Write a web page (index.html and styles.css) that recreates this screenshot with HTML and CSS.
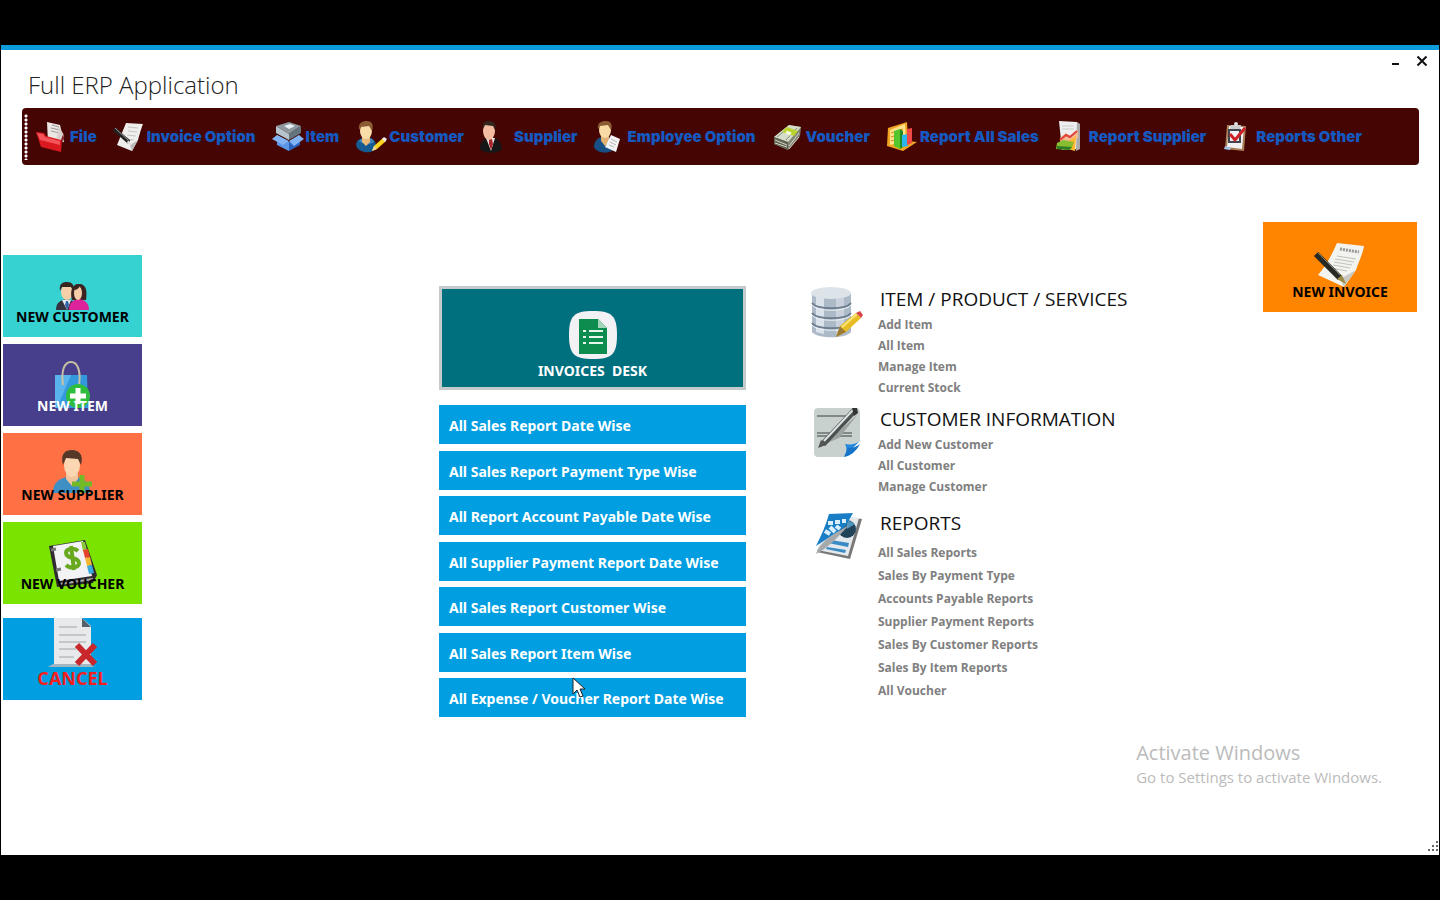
FILE: index.html
```html
<!DOCTYPE html>
<html lang="en">
<head>
    <meta charset="UTF-8">
    <meta name="viewport" content="width=device-width, initial-scale=1.0">
    <title>Full ERP Application</title>
    <link rel="stylesheet" href="styles.css">
</head>
<body>

<div class="window">
    <header class="titlebar">
        <h1>Full ERP Application</h1>
        <div class="window-controls">
            <button type="button" aria-label="Minimize"><svg width="12" height="12" viewBox="0 0 12 12"><path d="M2 9h7" stroke="#111" stroke-width="2"/></svg></button>
            <button type="button" aria-label="Close"><svg width="12" height="12" viewBox="0 0 12 12"><path d="M1.500 1.500l9 9M10.500 1.500l-9 9" stroke="#111" stroke-width="2"/></svg></button>
        </div>
    </header>

    <nav class="menu">
        <span class="grip"></span>
        <button type="button">
            <svg viewBox="0 0 32 32"><path d="M11 1l13 3 4 17-16 1z" fill="#ece7e4"/><path d="M16 4l7 2M15 7l9 2M15 10l9 2" stroke="#999" fill="none"/><path d="M23 6l5 8-4 14-5-4z" fill="#d8d0cd"/><path d="M0 11l8 1 2 3 15 4v12L5 26z" fill="#d91820"/><path d="M1 12l6 1 2 3 15 4v4L4 19z" fill="#f4535a"/><path d="M25 19l3-8-3 20z" fill="#8e1015"/></svg>
            File
        </button>
        <button type="button">
            <svg viewBox="0 0 32 32"><path d="M13 2l17 1c-2 5-3 9-5 16l-6 11-15-6z" fill="#eeeeec"/><path d="M19 30l-2-6 8-5z" fill="#bbb"/><path d="M15 6l10 1M15 10l9 1M14 14l9 1M13 18l8 1" stroke="#c6c6c6"/><path d="M1 8l15 13" stroke="#222" stroke-width="4"/><path d="M2 7l13 12" stroke="#999"/><path d="M15 19l4 5-5-2z" fill="#ddd"/></svg>
            Invoice Option
        </button>
        <button type="button">
            <svg viewBox="0 0 32 32"><path d="M4 5l13-4 12 4-12 8z" fill="#8c979e"/><path d="M4 5l13 8v6L4 12z" fill="#b6c4ce"/><path d="M17 13l12-8v7l-12 7z" fill="#65757f"/><path d="M12 5l6-2 5 2-6 3z" fill="#e9eff2"/><path d="M5 14l12 7v9L5 24z" fill="#5b95e6"/><path d="M17 21l11-7v10l-11 6z" fill="#2a62bd"/><path d="M5 14l-5 4 11 6 6-4zM17 20l10-6 5 4-10 7z" fill="#82b3f4"/></svg>
            Item
        </button>
        <button type="button">
            <svg viewBox="0 0 32 32"><path d="M1 24c0-5 5-7 11-8 6 1 9 4 9 9-1 9-18 8-20-1z" fill="#155a91"/><path d="M4 20c4-5 13-5 15 1-5 3-10 3-15-1z" fill="#4288ba"/><path d="M7 14h8v7l-4 4-4-4z" fill="#e9ba79"/><ellipse cx="11" cy="10" rx="6" ry="8" fill="#f8dda9"/><path d="M4 9C3 2 7 0 12 0s7 4 5 10L14 5 6 6z" fill="#8b5c33"/><path d="M17 30l2-5 9-8 3 3-9 8z" fill="#f7d51e"/><path d="M17 30l2-5 3 3z" fill="#ead5a6"/><path d="M27 18l3 3 2-3-3-2z" fill="#eee"/></svg>
            Customer
        </button>
        <button type="button">
            <svg viewBox="0 0 32 32"><path d="M0 28c0-8 5-11 10-12 6 1 11 3 12 12-4 5-18 5-22 0z" fill="#161616"/><path d="M6 17h9l-4 13z" fill="#e9e5e2"/><path d="M9 18h3l1 5-2 6-2-6z" fill="#a9232c"/><ellipse cx="9" cy="10" rx="6" ry="9" fill="#f4bda1"/><path d="M3 8C2 2 5 0 9 0s8 2 6 9L13 5 5 4z" fill="#33261f"/></svg>
            Supplier
        </button>
        <button type="button">
            <svg viewBox="0 0 32 32"><path d="M0 26c0-7 5-10 11-11 7 1 10 5 10 11-3 8-18 7-21 0z" fill="#174f84"/><path d="M7 14h8v6l-4 5-4-5z" fill="#e2b173"/><ellipse cx="11" cy="9" rx="6" ry="8" fill="#f8daa5"/><path d="M4 8C3 2 7 0 12 0s7 4 5 9L14 4 6 5z" fill="#8b5c33"/><path d="M17 14l9 4-4 13-11-5z" fill="#f5f5f5"/><path d="M17 18l6 3M16 21l6 3M15 24l5 2" stroke="#b5b5b5"/></svg>
            Employee Option
        </button>
        <button type="button">
            <svg viewBox="0 0 32 32"><path d="M2 16L17 4l12 2-1 9-12 14L2 23z" fill="#828573"/><path d="M2 16L17 4l12 2-13 15z" fill="#d6decb"/><path d="M5 16l11-9M14 19L25 7" stroke="#848c7b"/><path d="M10 11l5-5 11 4-4 5z" fill="#b9d42e"/><path d="M14 11l5 2" stroke="#f4f8da" stroke-width="3"/><path d="M2 16l14 5v8L2 23z" fill="#60634f"/><path d="M3 19l12 5M3 22l12 4M17 25l10-13M17 28l10-12" stroke="#d3d4ca"/></svg>
            Voucher
        </button>
        <button type="button">
            <svg viewBox="0 0 32 32"><path d="M2 7l19-6 1 19 9 1-14 9-16-5z" fill="#f2a423"/><path d="M4 9l15-6 1 17-16 4z" fill="#ffe28b"/><path d="M5 12l12-4M5 16l12-4M5 20l12-4" stroke="#d68b17"/><path d="M8 10l6-2v20l-6-3z" fill="#55c52d"/><path d="M14 8l3 2v16l-3 2z" fill="#248b21"/><path d="M16 14l6-1v12l-6 1z" fill="#2ab6ed"/><path d="M21 8l5-1v15l-5 2z" fill="#ee4848"/></svg>
            Report All Sales
        </button>
        <button type="button">
            <svg viewBox="0 0 32 32"><path d="M4 0l18 1 2 27-17 1z" fill="#eee"/><path d="M22 1l3 2v25l-4 2z" fill="#aaa"/><path d="M7 5h12M7 8h12" stroke="#ccc"/><path d="M5 17l6-5 4 3 8-6v8L5 24z" fill="#f4ba91"/><path d="M5 19l6-5 4 2 7-6" stroke="#e04036" stroke-width="2" fill="none"/><path d="M14 20l7-5-1 15-7-2z" fill="#ffb72d"/><path d="M2 22l6-3 11 2-3 8-15-1z" fill="#86bd31"/><path d="M2 25l15 1-3 3-12-1z" fill="#317b26"/></svg>
            Report Supplier
        </button>
        <button type="button">
            <svg viewBox="0 0 32 32"><path d="M5 4l19 1-2 25-19-2z" fill="#a87d58"/><path d="M7 5l15 1-2 22-15-2z" fill="#f2f2f4"/><path d="M7 9h11v12H7z" fill="none" stroke="#3e4652" stroke-width="2"/><path d="M9 4h10l-1 4H8z" fill="#ccc"/><circle cx="14" cy="3" r="2" fill="#ddd"/><path d="M8 13l5 6L23 7" stroke="#ce2027" stroke-width="3" fill="none"/><path d="M3 25l6 2-1 2-6-1z" fill="#9fc2e8"/></svg>
            Reports Other
        </button>
    </nav>

    <main>
        <!-- quick actions -->
        <div class="tiles">
            <button type="button" class="tile tile-customer">
                <svg viewBox="0 0 50 50"><path d="M8 39c0-8 5-10 11-11 6 1 9 4 9 11z" fill="#36323f"/><path d="M14 29h9l-4 10z" fill="#e8ebf4"/><path d="M18 30h2l1 4-2 5-2-5z" fill="#3265a5"/><ellipse cx="19" cy="21" rx="6" ry="8" fill="#f5cfaa"/><path d="M12 20c-1-7 2-9 7-9s8 3 6 9l-2-4-9 0z" fill="#37261f"/><path d="M24 29c-2-7-1-16 7-16s8 8 7 16z" fill="#3b2422"/><path d="M21 39c0-8 4-10 10-11 6 1 10 4 10 11z" fill="#dc239b"/><ellipse cx="30" cy="22" rx="4" ry="7" fill="#f7cda9"/><path d="M26 19c3 0 5-2 6-4l4 5-1-6-7-1z" fill="#3b2422"/></svg>
                <span>NEW CUSTOMER</span>
            </button>
            <button type="button" class="tile tile-item">
                <svg viewBox="0 0 50 50"><path d="M7 15h32l1 33H7z" fill="#3398dc"/><path d="M7 15h16L9 48H7z" fill="#59b3ec"/><path d="M15 25c-2-14 1-23 8-23s10 10 8 23" stroke="#c9c1a3" stroke-width="2" fill="none"/><circle cx="30" cy="36" r="12" fill="#2ebd3c"/><path d="M30 28v16M22 36h16" stroke="#fff" stroke-width="5"/></svg>
                <span>NEW ITEM</span>
            </button>
            <button type="button" class="tile tile-supplier">
                <svg viewBox="0 0 50 50"><path d="M5 44c0-12 7-15 19-17 11 2 18 6 18 17z" fill="#3d8fc4"/><path d="M18 25h12v5l-6 7-6-7z" fill="#f2c49b"/><ellipse cx="24" cy="16" rx="8" ry="12" fill="#fad6b3"/><path d="M15 16C12 5 17 1 24 1s12 5 9 15l-3-6-12-1z" fill="#553827"/><path d="M34 26v18M24 35h20" stroke="#72ba28" stroke-width="5"/></svg>
                <span>NEW SUPPLIER</span>
            </button>
            <button type="button" class="tile tile-voucher">
                <svg viewBox="0 0 50 50"><path d="M1 8l36-6 12 35-4 8-36 4z" fill="#302b30"/><path d="M5 8l30-5 9 35-33 5z" fill="#f3f2f5"/><path d="M33 4l4 0 2 8-4 1z" fill="#8cc83c"/><path d="M35 12l5-1 2 8-5 1z" fill="#e6432c"/><path d="M37 20l5-1 2 8-5 1z" fill="#f5b832"/><path d="M39 28l5-1 2 8-5 1z" fill="#39a9de"/><path d="M12 46l33-5" stroke="#aaa" stroke-width="2"/><path d="M3 12l5-1M8 32l5-1" stroke="#777" stroke-width="3"/><path d="M30 13c-4-4-12-2-12 2 0 6 13 4 13 10 0 5-9 6-13 2M23 8l3 24" stroke="#68a91e" stroke-width="4" fill="none"/></svg>
                <span>NEW VOUCHER</span>
            </button>
            <button type="button" class="tile tile-cancel">
                <svg viewBox="0 0 50 50"><path d="M6 0h28l9 8v40H6z" fill="#e7e9ea"/><path d="M34 0l9 9h-9z" fill="#55616a"/><path d="M11 9h18M11 17h27M11 24h27M11 31h17M11 39h15" stroke="#a1a6a9"/><path d="M0 49h46l-3-3H5z" fill="#a1b6c1"/><path d="M29 27l18 19M47 27L29 46" stroke="#c8272c" stroke-width="6"/></svg>
                <span>CANCEL</span>
            </button>
        </div>

        <!-- invoice reports -->
        <div class="desk">
            <button type="button" class="desk-main">
                <svg viewBox="0 0 48 48"><path d="M24 0c19 0 24 5 24 24s-5 24-24 24S0 43 0 24 5 0 24 0z" fill="#f2f1f3"/><path d="M10 8h19l9 9v26H10z" fill="#0d8c50"/><path d="M29 8l9 9h-9z" fill="#a3d5ba"/><path d="M20 20h14M20 26h14M20 32h14M14 20h3M14 26h3M14 32h3" stroke="#e7f5eb" stroke-width="2"/></svg>
                <span>INVOICES&nbsp; DESK</span>
            </button>
            <div class="desk-list">
                <button type="button">All Sales Report Date Wise</button>
                <button type="button">All Sales Report Payment Type Wise</button>
                <button type="button">All Report Account Payable Date Wise</button>
                <button type="button">All Supplier Payment Report Date Wise</button>
                <button type="button">All Sales Report Customer Wise</button>
                <button type="button">All Sales Report Item Wise</button>
                <button type="button">All Expense / Voucher Report Date Wise</button>
            </div>
            <svg class="cursor" width="14" height="22" viewBox="0 0 14 22"><path d="M1 1v16l4-4 3 7 3-1-3-7h5z" fill="#fff" stroke="#222"/></svg>
        </div>

        <!-- links -->
        <div class="info">
            <section>
                <svg viewBox="0 0 52 52"><path d="M1 8v38c5 7 34 7 39 0V8z" fill="#acb9c7"/><path d="M5 10h8v38l-8-2z" fill="#dae2ea"/><path d="M25 10h8v38h-8z" fill="#c8d1dc"/><ellipse cx="20" cy="7" rx="20" ry="6" fill="#dce4ea"/><path d="M1 17c5 7 34 7 39 0M1 27c5 7 34 7 39 0M1 37c5 7 34 7 39 0" stroke="#6d7e8f" stroke-width="2" fill="none"/><path d="M1 19c5 7 34 7 39 0M1 29c5 7 34 7 39 0M1 39c5 7 34 7 39 0" stroke="#edf1f5" fill="none"/><path d="M25 51l4-11 16-13 5 5-15 14z" fill="#e7bc24"/><path d="M30 42l16-14" stroke="#fbe476" stroke-width="2"/><path d="M25 51l4-11 6 6z" fill="#9b7b36"/><path d="M45 27l4-2 3 4-2 3z" fill="#d9464a"/></svg>
                <div>
                    <h2>ITEM / PRODUCT / SERVICES</h2>
                    <ul>
                        <li><a href="#">Add Item</a></li>
                        <li><a href="#">All Item</a></li>
                        <li><a href="#">Manage Item</a></li>
                        <li><a href="#">Current Stock</a></li>
                    </ul>
                </div>
            </section>
            <section>
                <svg viewBox="0 0 52 52"><rect x="3" y="2" width="46" height="49" rx="4" fill="#c9d1cf"/><path d="M6 10h31M6 27h35M6 30h35" stroke="#69716f" stroke-width="1.500"/><path d="M14 38L47 8 28 32z" fill="#9ba3a0"/><path d="M12 38L43 5" stroke="#4c5050" stroke-width="6"/><path d="M13 35L42 4" stroke="#dfe4e4" stroke-width="2"/><path d="M41 2l5 0 1 5-4 3z" fill="#333"/><path d="M7 42l3-8 5 5z" fill="#555"/><path d="M33 51c3-5 3-9 1-13 6 1 11 0 15-3z" fill="#2489dc"/><path d="M33 51l16-16v16z" fill="#fff"/><path d="M33 51c6-1 12-5 16-13-4 3-8 4-12 4z" fill="#1674c8"/></svg>
                <div>
                    <h2>CUSTOMER INFORMATION</h2>
                    <ul>
                        <li><a href="#">Add New Customer</a></li>
                        <li><a href="#">All Customer</a></li>
                        <li><a href="#">Manage Customer</a></li>
                    </ul>
                </div>
            </section>
            <section class="reports">
                <svg viewBox="0 0 52 52"><path d="M22 5l29 4-12 40L6 42z" fill="#777"/><path d="M22 4l26 4-11 38L6 40z" fill="#e3e9ed"/><circle cx="36" cy="19" r="9" fill="#21435a"/><path d="M36 19l-1-10 9 5z" fill="#4d94bf"/><path d="M20 30l18 3-1 4-20-4zM16 37l19 3-1 3-19-4z" fill="#3b8bc4"/><path d="M18 4l24-1-8 14L5 36c5-10 10-21 13-32z" fill="#197ec6"/><path d="M5 44c3-11 14-18 33-29C27 27 16 39 5 44z" fill="#a5a9ac"/><path d="M17 13h5M24 12h5M31 11h4M14 21l5 3M19 17l5 5M25 16l4 3" stroke="#d9efff" stroke-width="4" fill="none"/></svg>
                <div>
                    <h2>REPORTS</h2>
                    <ul>
                        <li><a href="#">All Sales Reports</a></li>
                        <li><a href="#">Sales By Payment Type</a></li>
                        <li><a href="#">Accounts Payable Reports</a></li>
                        <li><a href="#">Supplier Payment Reports</a></li>
                        <li><a href="#">Sales By Customer Reports</a></li>
                        <li><a href="#">Sales By Item Reports</a></li>
                        <li><a href="#">All Voucher</a></li>
                    </ul>
                </div>
            </section>
        </div>

        <button type="button" class="tile tile-invoice">
            <svg viewBox="0 0 54 54"><path d="M24 1l27 3c-1 7-5 15-8 24l-12 17L5 33c7-8 13-18 19-32z" fill="#f3f3ef"/><path d="M31 45l-4-8 16-9z" fill="#c9c9c4"/><path d="M27 7l19 3" stroke="#999" stroke-width="3" stroke-dasharray="2 1"/><path d="M24 14l19 3M22 17l19 3M21 20l18 3M20 23l17 3M18 26l16 3" stroke="#c0c0bd"/><path d="M3 12l24 24" stroke="#272a24" stroke-width="6"/><path d="M5 11l22 22" stroke="#7d806d"/><path d="M24 37l9 5-4-9z" fill="#9b8b43"/></svg>
            <span>NEW INVOICE</span>
        </button>
    </main>

    <div class="watermark">
        <p class="watermark-title">Activate Windows</p>
        <p>Go to Settings to activate Windows.</p>
    </div>
    <svg class="resize" width="12" height="12" viewBox="0 0 12 12"><path d="M9 0h2v2H9zM5 4h2v2H5zM9 4h2v2H9zM1 8h2v2H1zM5 8h2v2H5zM9 8h2v2H9z" fill="#666"/></svg>
</div>

</body>
</html>
```
FILE: styles.css
```css
* {
    box-sizing: border-box;
}

body {
    margin: 0;
    padding: 45px 1px;
    background: #000;
    font-family: "Open Sans", "Noto Sans", sans-serif;
}

button {
    border: none;
    padding: 0;
    background: none;
    font-family: "Noto Sans", sans-serif;
    cursor: pointer;
}

h1, h2, p, ul {
    margin: 0;
    padding: 0;
}

.window {
    position: relative;
    min-height: calc(100vh - 90px);
    border-top: 5px solid #0c9bdb;
    background: #fff;
}

/* title bar */
.titlebar {
    display: flex;
    justify-content: space-between;
    align-items: flex-start;
    padding: 5px 11px 0 27px;
    height: 58px;
}

.titlebar h1 {
    margin-top: 14px;
    font-size: 24px;
    line-height: 32px;
    font-weight: 300;
    color: #222;
}

.window-controls {
    display: flex;
    gap: 14px;
}

.window-controls svg {
    display: block;
}

/* main menu */
.menu {
    display: flex;
    align-items: center;
    gap: 16px;
    margin: 0 20px 0 21px;
    height: 57px;
    border-radius: 4px;
    background: #450603;
}

.menu .grip {
    width: 4px;
    height: 46px;
    margin: 0 -8px 0 2px;
    background: radial-gradient(circle, #fff 1px, transparent 2px) 0 0 / 4px 4px;
}

.menu button {
    display: flex;
    align-items: center;
    gap: 2px;
    font-family: Inter, sans-serif;
    font-size: 15px;
    font-weight: 900;
    color: #1458c0;
    white-space: nowrap;
}

.menu svg {
    width: 32px;
    height: 32px;
}

main {
    display: flex;
    align-items: flex-start;
    padding: 57px 22px 0 2px;
}

/* coloured tiles */
.tile {
    display: flex;
    flex-direction: column;
    align-items: center;
    justify-content: flex-end;
    width: 139px;
    height: 82px;
    padding-bottom: 10px;
    font-size: 14px;
    line-height: 20px;
    font-weight: 700;
    color: #000;
}

.tile svg {
    flex: none;
    width: 50px;
    height: 50px;
    margin-bottom: -14px;
}

.tile span {
    position: relative;
}

.tiles {
    display: flex;
    flex-direction: column;
    gap: 7px;
    margin-top: 33px;
}

.tile-customer {
    background: #36d1d1;
}

.tile-item {
    background: #473f8c;
    color: #fff;
}

.tile-supplier {
    background: #ff7045;
}

.tile-voucher {
    background: #7ae400;
}

.tile-cancel {
    margin-top: 7px;
    background: #019fe2;
    font-size: 18px;
    line-height: 24px;
    color: #f3201d;
}

.tile-cancel svg {
    margin-bottom: -2px;
}

.tile-invoice {
    width: 154px;
    height: 90px;
    margin-left: auto;
    background: #ff8500;
}

.tile-invoice svg {
    width: 54px;
    height: 54px;
}

/* invoice desk */
.desk {
    position: relative;
    width: 307px;
    margin: 64px 0 0 297px;
}

.desk-main {
    display: flex;
    flex-direction: column;
    align-items: center;
    justify-content: flex-end;
    width: 100%;
    height: 104px;
    padding-bottom: 6px;
    border: 3px solid #c5cacc;
    background: #00707f;
    font-size: 14px;
    line-height: 20px;
    font-weight: 700;
    color: #fff;
}

.desk-main svg {
    width: 48px;
    height: 48px;
    margin-bottom: 2px;
}

.desk-list {
    display: flex;
    flex-direction: column;
    justify-content: space-between;
    min-height: 312px;
    margin-top: 15px;
}

.desk-list button {
    height: 39px;
    padding: 2px 10px 0;
    background: #019fe2;
    font-size: 14px;
    font-weight: 700;
    color: #fff;
    text-align: left;
}

.cursor {
    position: absolute;
    left: 133px;
    top: 391px;
}

/* link lists */
.info {
    margin: 64px 0 0 65px;
}

.info section {
    display: flex;
    gap: 15px;
    margin-bottom: 8px;
}

.info section > svg {
    width: 52px;
    height: 52px;
}

.info h2 {
    padding-left: 2px;
    font-size: 19px;
    line-height: 26px;
    font-weight: 400;
    color: #111;
}

.info ul {
    margin-top: 2px;
    list-style: none;
}

.info li {
    font-size: 12px;
    line-height: 21px;
    font-weight: 700;
}

.info a {
    color: #808080;
    text-decoration: none;
}

.info .reports {
    margin-top: 13px;
}

.info .reports ul {
    margin-top: 5px;
}

.info .reports li {
    line-height: 23px;
}

/* desktop overlay */
.watermark {
    position: absolute;
    right: 57px;
    bottom: 68px;
    font-size: 15px;
    line-height: 20px;
    color: #bbb;
}

.watermark-title {
    font-size: 20px;
    line-height: 28px;
}

.resize {
    position: absolute;
    right: 0;
    bottom: 2px;
}
```
